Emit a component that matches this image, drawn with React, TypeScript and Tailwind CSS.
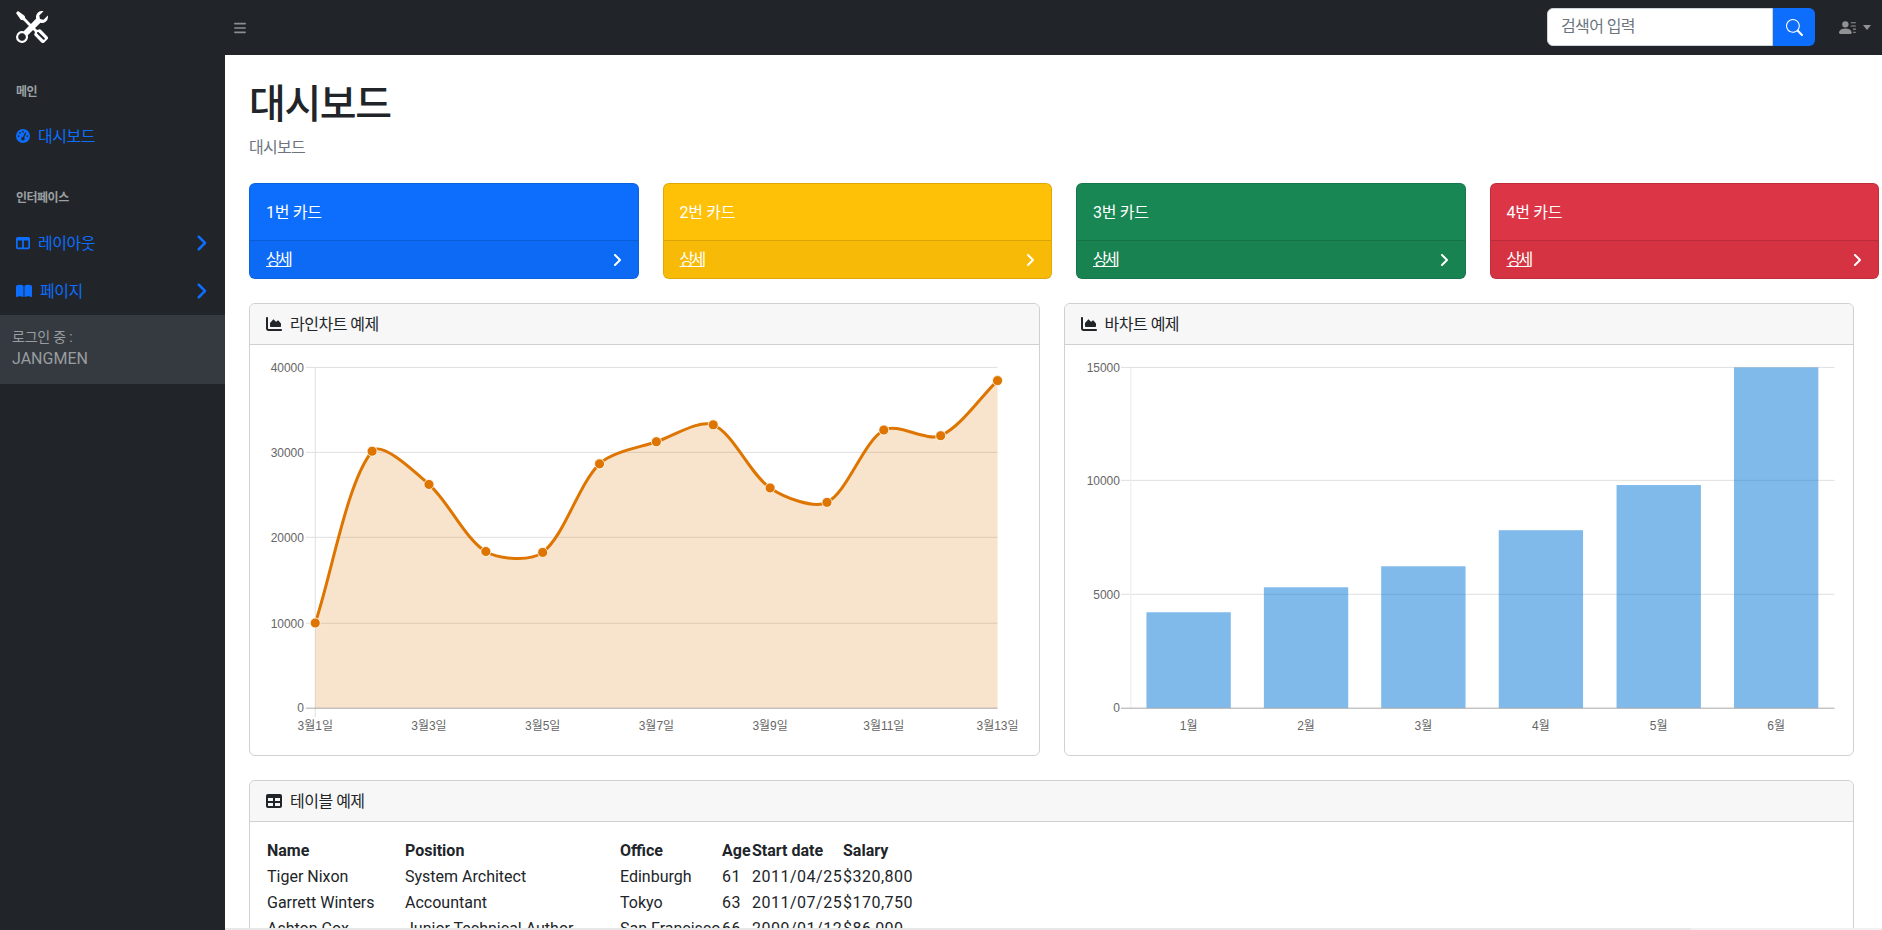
import React from "react";
import { FaGaugeHigh, FaTableColumns, FaBookOpen, FaChartArea, FaTable, FaBars, FaAngleRight } from "react-icons/fa6";
import { BsTools, BsSearch, BsPersonLinesFill } from "react-icons/bs";

const values = [10000, 30162, 26263, 18394, 18287, 28682, 31274, 33259, 25849, 24159, 32651, 31984, 38451];
const LEFT = 315.3, RIGHT = 998, TOP = 367.3, BOTTOM = 708.3;
const pts = values.map((v, i) => ({
  x: LEFT + (i * (RIGHT - LEFT)) / 12,
  y: BOTTOM - (v / 40000) * (BOTTOM - TOP),
}));

function linePath() {
  const t = 0.3;
  const ctrl = pts.map((cur, i) => {
    const prev = pts[i - 1] || cur;
    const next = pts[i + 1] || cur;
    const d01 = Math.hypot(cur.x - prev.x, cur.y - prev.y);
    const d12 = Math.hypot(next.x - cur.x, next.y - cur.y);
    const s = d01 + d12 || 1;
    const fa = (t * d01) / s;
    const fb = (t * d12) / s;
    const dx = next.x - prev.x;
    const dy = next.y - prev.y;
    return {
      px: Math.max(LEFT, cur.x - fa * dx),
      py: Math.min(BOTTOM, cur.y - fa * dy),
      nx: Math.min(RIGHT, cur.x + fb * dx),
      ny: Math.min(BOTTOM, cur.y + fb * dy),
    };
  });
  let d = `M${pts[0].x} ${pts[0].y}`;
  for (let i = 1; i < pts.length; i++) {
    d += ` C${ctrl[i - 1].nx} ${ctrl[i - 1].ny} ${ctrl[i].px} ${ctrl[i].py} ${pts[i].x} ${pts[i].y}`;
  }
  return d;
}

const chartFont = "'Liberation Sans','Noto Sans CJK KR',sans-serif";

function LineChart() {
  const grid = [
    { y: 367.3, l: "40000" },
    { y: 452.3, l: "30000" },
    { y: 537.3, l: "20000" },
    { y: 623.3, l: "10000" },
  ];
  const xl = [0, 2, 4, 6, 8, 10, 12];
  const d = linePath();
  return (
    <svg viewBox="250 345 789 410" className="block w-full h-[410px]" fontFamily={chartFont} fontSize="12" fill="#666">
      {grid.map((g) => (
        <line key={g.y} x1={306} x2={RIGHT} y1={g.y} y2={g.y} stroke="#dfdfdf" strokeWidth="1" />
      ))}
      <line x1={LEFT} x2={LEFT} y1={TOP} y2={BOTTOM + 9} stroke="#dfdfdf" />
      <path d={`${d} L${RIGHT} ${BOTTOM} L${LEFT} ${BOTTOM} Z`} fill="rgba(221,118,0,0.2)" />
      <line x1={306} x2={RIGHT} y1={BOTTOM} y2={BOTTOM} stroke="#a8a8a8" />
      {grid.map((g) => (
        <text key={g.l} x={304} y={g.y + 4.3} textAnchor="end">{g.l}</text>
      ))}
      <text x={304} y={BOTTOM + 4.3} textAnchor="end">0</text>
      {xl.map((i) => (
        <text key={i} x={pts[i].x} y={730} textAnchor="middle">{`3월${i + 1}일`}</text>
      ))}
      <path d={d} fill="none" stroke="#dd7500" strokeWidth="3" />
      {pts.map((p, i) => (
        <circle key={i} cx={p.x} cy={p.y} r="5" fill="#dd7500" stroke="rgba(255,255,255,0.8)" strokeWidth="1" />
      ))}
    </svg>
  );
}

function BarChart() {
  const bars = [
    { x: 1146.5, top: 612.3, l: "1월" },
    { x: 1264, top: 587.3, l: "2월" },
    { x: 1381.4, top: 566.3, l: "3월" },
    { x: 1499, top: 530.2, l: "4월" },
    { x: 1616.9, top: 485, l: "5월" },
    { x: 1734.4, top: 367.3, l: "6월" },
  ];
  const B = 708.3;
  const L = 1130.8;
  const R = 1835;
  const grid = [
    { y: 367.3, l: "15000" },
    { y: 480.3, l: "10000" },
    { y: 594.3, l: "5000" },
  ];
  return (
    <svg viewBox="1065 345 789 410" className="block w-full h-[410px]" fontFamily={chartFont} fontSize="12" fill="#666">
      {grid.map((g) => (
        <line key={g.y} x1={1121} x2={R} y1={g.y} y2={g.y} stroke="#dfdfdf" />
      ))}
      <line x1={L} x2={L} y1={367.3} y2={B} stroke="#ececec" />
      {bars.map((b) => (
        <rect key={b.l} x={b.x} y={b.top} width={84.4} height={B - b.top} fill="rgba(2,117,216,0.5)" />
      ))}
      <line x1={1121} x2={R} y1={B} y2={B} stroke="#a8a8a8" />
      {grid.map((g) => (
        <text key={g.l} x={1120} y={g.y + 4.3} textAnchor="end">{g.l}</text>
      ))}
      <text x={1120} y={B + 4.3} textAnchor="end">0</text>
      {bars.map((b) => (
        <text key={b.l} x={b.x + 42.2} y={730} textAnchor="middle">{b.l}</text>
      ))}
    </svg>
  );
}

function StatCard({ title, cls }: { title: string; cls: string }) {
  return (
    <div className={`h-24 rounded-md border border-black/[.125] text-white ${cls}`}>
      <div className="h-[56px] px-4 pt-0.5 flex items-center tracking-[-0.3px]">{title}</div>
      <div className="h-[38px] px-4 flex items-center justify-between bg-black/[.03] border-t border-black/[.125] rounded-b-md">
        <a className="underline tracking-[-2.6px]">상세</a>
        <FaAngleRight className="w-[10px] h-4" />
      </div>
    </div>
  );
}

function Panel({ icon, title, children, cls = "" }: { icon: React.ReactNode; title: string; children: React.ReactNode; cls?: string }) {
  return (
    <div className={`rounded-md border border-[#d0d0d0] bg-white ${cls}`}>
      <div className="h-[41px] px-4 flex items-center gap-2 bg-[#f7f7f7] border-b border-[#d0d0d0] rounded-t-md text-[#212529]">
        {icon}
        <span className="pt-0.5 tracking-[-0.5px]">{title}</span>
      </div>
      {children}
    </div>
  );
}

function NavItem({ icon, label, chevron }: { icon: React.ReactNode; label: string; chevron?: boolean }) {
  return (
    <a className="h-12 pl-4 pr-[18px] flex items-center text-[#0d6efd]">
      <span className="flex items-center gap-2">
        {icon}
        <span className="pt-0.5 tracking-[-0.5px]">{label}</span>
      </span>
      {chevron && <FaAngleRight className="ml-auto w-[12.5px] h-5" />}
    </a>
  );
}

const rows = [
  ["Tiger Nixon", "System Architect", "Edinburgh", "61", "2011/04/25", "$320,800"],
  ["Garrett Winters", "Accountant", "Tokyo", "63", "2011/07/25", "$170,750"],
  ["Ashton Cox", "Junior Technical Author", "San Francisco", "66", "2009/01/12", "$86,000"],
];
const heads = ["Name", "Position", "Office", "Age", "Start date", "Salary"];

export default function App() {
  return (
    <div className="h-screen overflow-hidden flex flex-col bg-white text-[#212529] text-base leading-6 font-['Roboto','Noto_Sans_CJK_KR',sans-serif]">
      <header className="h-[55px] shrink-0 bg-[#212529] flex items-center">
        <div className="w-[225px] pl-4 pb-px shrink-0">
          <BsTools className="w-8 h-8 text-white" />
        </div>
        <FaBars className="ml-[9px] w-3 h-[14px] text-[#8c8e90]" />
        <div className="ml-auto flex h-[38px] mb-px">
          <div className="w-[226px] bg-white rounded-l-md border border-[#ced4da] pl-[13px] flex items-center text-[#6c757d] tracking-[-0.6px]">검색어 입력</div>
          <button className="w-[42px] bg-[#0d6efd] rounded-r-md flex items-center justify-center text-white">
            <BsSearch className="w-[17px] h-[17px]" />
          </button>
        </div>
        <div className="ml-6 mr-[11px] flex items-center gap-[7px] text-[#909294]">
          <BsPersonLinesFill className="w-[17px] h-[17px]" />
          <span className="w-0 h-0 border-x-[4.5px] border-x-transparent border-t-[5px] border-t-[#909294]" />
        </div>
      </header>
      <div className="flex-1 min-h-0 flex">
        <aside className="w-[225px] shrink-0 bg-[#212529]">
          <div className="pt-[28px] pb-[11px] px-4 text-xs leading-[18px] font-bold text-[#9ca0a3] tracking-[-0.5px]">메인</div>
          <NavItem icon={<FaGaugeHigh className="w-[14px] h-[14px]" />} label="대시보드" />
          <div className="pt-[29px] pb-3 px-4 text-xs leading-[18px] font-bold text-[#9ca0a3] tracking-[-0.5px]">인터페이스</div>
          <NavItem chevron icon={<FaTableColumns className="w-[14px] h-[14px]" />} label="레이아웃" />
          <NavItem chevron icon={<FaBookOpen className="w-4 h-4" />} label="페이지" />
          <div className="h-[69px] bg-[#343a40] px-3 pt-[12px] text-[#9a9d9f]">
            <div className="text-sm leading-[20px] tracking-[-0.2px]">로그인 중 :</div>
            <div className="leading-[24px]">JANGMEN</div>
          </div>
        </aside>
        <div className="flex-1 min-w-0 flex flex-col">
          <main className="flex-1 min-h-0 overflow-hidden pl-6 pt-[26px]">
            <h1 className="text-[40px] leading-[48px] font-medium tracking-[-1.4px]">대시보드</h1>
            <div className="mt-[7px] h-6 text-[#6c757d] tracking-[-0.7px]">대시보드</div>
            <div className="mt-[23px] w-[1630px] grid grid-cols-4 gap-6">
              <StatCard title="1번 카드" cls="bg-[#0d6efd]" />
              <StatCard title="2번 카드" cls="bg-[#ffc107]" />
              <StatCard title="3번 카드" cls="bg-[#198754]" />
              <StatCard title="4번 카드" cls="bg-[#dc3545]" />
            </div>
            <div className="mt-6 w-[1605px] grid grid-cols-2 gap-6">
              <Panel icon={<FaChartArea className="w-4 h-4" />} title="라인차트 예제">
                <LineChart />
              </Panel>
              <Panel icon={<FaChartArea className="w-4 h-4" />} title="바차트 예제">
                <BarChart />
              </Panel>
            </div>
            <Panel cls="mt-6 w-[1605px]" icon={<FaTable className="w-4 h-4" />} title="테이블 예제">
              <div className="p-4">
                <table className="table-fixed w-[657px] text-left whitespace-nowrap">
                  <colgroup>
                    <col className="w-[138px]" />
                    <col className="w-[215px]" />
                    <col className="w-[102px]" />
                    <col className="w-[30px]" />
                    <col className="w-[91px]" />
                    <col className="w-[81px]" />
                  </colgroup>
                  <thead>
                    <tr>
                      {heads.map((h) => (
                        <th key={h} className="p-px font-bold">{h}</th>
                      ))}
                    </tr>
                  </thead>
                  <tbody>
                    {rows.map((r) => (
                      <tr key={r[0]}>
                        {r.map((c, i) => (
                          <td key={c} className={i >= 3 ? "p-px tracking-[0.5px]" : "p-px"}>{c}</td>
                        ))}
                      </tr>
                    ))}
                  </tbody>
                </table>
              </div>
            </Panel>
          </main>
          <div className="h-[2px] shrink-0 bg-[#f1f1f1] flex">
            <div className="w-[1466px] bg-[#e8e8e8]" />
          </div>
        </div>
      </div>
    </div>
  );
}
